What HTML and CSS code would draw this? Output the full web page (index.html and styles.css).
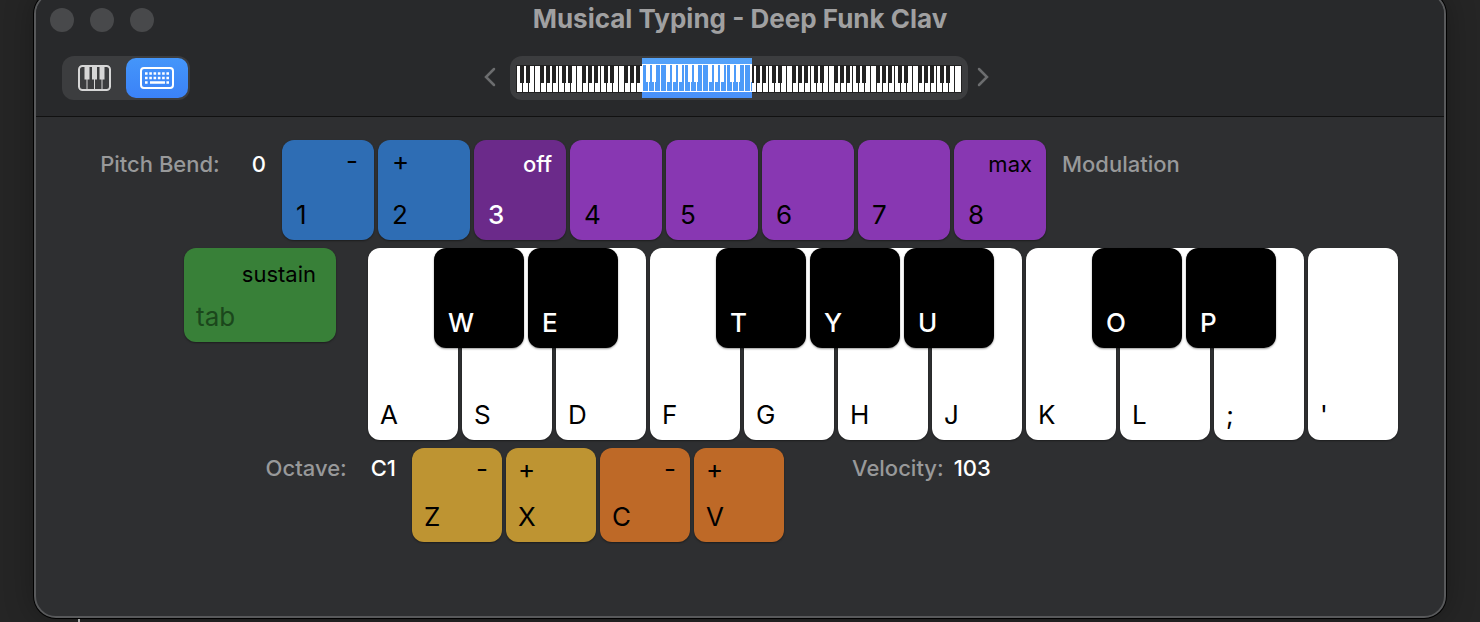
FILE: index.html
```html
<!DOCTYPE html>
<html lang="en">
  <head>
    <meta charset="UTF-8" />
    <meta name="viewport" content="width=device-width, initial-scale=1.0" />
    <title>Musical Typing - Deep Funk Clav</title>
    <link rel="stylesheet" href="styles.css">
  </head>
  <body>
    <main class="window">
      <header class="header">
        <div class="titlebar">
          <div class="lights">
            <button class="light" aria-label="Close"></button>
            <button class="light" aria-label="Minimize"></button>
            <button class="light" aria-label="Zoom"></button>
          </div>
          <h1>Musical Typing - Deep Funk Clav</h1>
        </div>

        <div class="toolbar">
          <div class="switch">
            <button class="switch-btn" aria-label="Keyboard" aria-pressed="false">
              <svg width="34" height="28" viewBox="0 0 34 28">
                <rect x="1" y="2" width="31" height="24" rx="3.500" fill="none" stroke="#d6d6d6" stroke-width="2" />
                <path d="M6.500 2h5v13.500h-5zM14 2h5v13.500h-5zM21.500 2h5v13.500h-5z" fill="#d6d6d6" />
                <path d="M9 15v11M16.500 15v11M24 15v11" stroke="#d6d6d6" />
              </svg>
            </button>
            <button class="switch-btn active" aria-label="Musical Typing" aria-pressed="true">
              <svg width="36" height="24" viewBox="0 0 36 24">
                <rect x="2" y="2" width="32" height="20" rx="3" fill="none" stroke="#fff" stroke-width="2" />
                <path d="M6 7.500h24M6 12h24" stroke="#fff" stroke-width="2.600" stroke-dasharray="2.600 1.680" />
                <path d="M6 16.500h2.600M11 16.500h15M27.400 16.500h2.600" stroke="#fff" stroke-width="2.400" />
              </svg>
            </button>
          </div>

          <div class="range">
            <button class="arrow prev" aria-label="Previous octave">
              <svg width="14" height="20" viewBox="0 0 14 20"><path d="M11 2L3 10l8 8" /></svg>
            </button>
            <div class="minimap">
              <svg width="446" height="40" viewBox="0 0 446 40">
                <defs>
                  <pattern id="octave" x="1" y="0" width="42" height="40" patternUnits="userSpaceOnUse">
                    <path d="M0 8h5v26H0zM6 8h5v26H6zM12 8h5v26h-5zM18 8h5v26h-5zM24 8h5v26h-5zM30 8h5v26h-5zM36 8h5v26h-5z" fill="#fff" />
                    <path d="M3 8h4v17H3zM9 8h4v17H9zM23 8h4v17h-4zM29 8h4v17h-4zM35 8h4v17h-4z" fill="#222" />
                  </pattern>
                  <pattern id="octaveOn" x="1" y="0" width="42" height="40" patternUnits="userSpaceOnUse">
                    <path d="M0 7h5v26H0zM6 7h5v26H6zM12 7h5v26h-5zM18 7h5v26h-5zM24 7h5v26h-5zM30 7h5v26h-5zM36 7h5v26h-5z" fill="#4d9bf9" />
                    <path d="M3 7h4v17H3zM9 7h4v17H9zM23 7h4v17h-4zM29 7h4v17h-4zM35 7h4v17h-4z" fill="#fff" />
                  </pattern>
                  <linearGradient id="blue" x2="0" y2="1">
                    <stop offset="0" stop-color="#55a4fa" />
                    <stop offset="1" stop-color="#4890fa" />
                  </linearGradient>
                </defs>
                <rect y="7" width="446" height="28" fill="#222" />
                <rect x="1" y="8" width="444" height="26" fill="url(#octave)" />
                <rect x="443" y="8" width="2" height="26" fill="#fff" />
                <rect x="126" width="110" height="40" fill="url(#blue)" />
                <rect x="126" y="6" width="110" height="28" fill="#fff" />
                <rect x="126" y="7" width="110" height="26" fill="url(#octaveOn)" />
              </svg>
            </div>
            <button class="arrow" aria-label="Next octave">
              <svg width="14" height="20" viewBox="0 0 14 20"><path d="M3 2l8 8-8 8" /></svg>
            </button>
          </div>
        </div>
      </header>

      <section class="board">
        <!-- Pitch bend + modulation -->
        <div class="row">
          <div class="lead bend"><span>Pitch Bend:</span><output>0</output></div>
          <div class="keys">
            <button class="key tall blue"><span class="hint sign right">-</span><span>1</span></button>
            <button class="key tall blue"><span class="hint sign">+</span><span>2</span></button>
            <button class="key tall purple selected"><span class="hint right">off</span><span>3</span></button>
            <button class="key tall purple"><span>4</span></button>
            <button class="key tall purple"><span>5</span></button>
            <button class="key tall purple"><span>6</span></button>
            <button class="key tall purple"><span>7</span></button>
            <button class="key tall purple"><span class="hint right">max</span><span>8</span></button>
          </div>
          <div class="label">Modulation</div>
        </div>

        <!-- Sustain + piano keys -->
        <div class="row middle">
          <button class="key green"><span class="hint right">sustain</span><span>tab</span></button>
          <div class="keys">
            <div class="note"><button class="key white">A</button><button class="key black">W</button></div>
            <div class="note"><button class="key white">S</button><button class="key black">E</button></div>
            <div class="note"><button class="key white">D</button></div>
            <div class="note"><button class="key white">F</button><button class="key black">T</button></div>
            <div class="note"><button class="key white">G</button><button class="key black">Y</button></div>
            <div class="note"><button class="key white">H</button><button class="key black">U</button></div>
            <div class="note"><button class="key white">J</button></div>
            <div class="note"><button class="key white">K</button><button class="key black">O</button></div>
            <div class="note"><button class="key white">L</button><button class="key black">P</button></div>
            <div class="note"><button class="key white">;</button></div>
            <div class="note"><button class="key white">'</button></div>
          </div>
        </div>

        <!-- Octave + velocity -->
        <div class="row">
          <div class="lead octave"><span>Octave:</span><output>C1</output></div>
          <div class="keys">
            <button class="key yellow"><span class="hint sign right">-</span><span>Z</span></button>
            <button class="key yellow"><span class="hint sign">+</span><span>X</span></button>
            <button class="key orange"><span class="hint sign right">-</span><span>C</span></button>
            <button class="key orange"><span class="hint sign">+</span><span>V</span></button>
          </div>
          <div class="label velocity"><span>Velocity:</span><output>103</output></div>
        </div>
      </section>
    </main>
    <div class="tick"></div>
  </body>
</html>
```
FILE: styles.css
```css
* {
  margin: 0;
  padding: 0;
  box-sizing: border-box;
}

body {
  font-family: Inter, "Liberation Sans", sans-serif;
  background: #252525;
  height: 100vh;
  overflow: hidden;
}

button {
  font: inherit;
  color: inherit;
  border: none;
  background: none;
}

svg {
  display: block;
}

/* the top edge sits just above the screen */
.window {
  margin: -8px 34px 0;
  min-height: calc(100vh + 4px);
  background: #2e2f31;
  border: 2px solid #58595b;
  border-radius: 22px;
  box-shadow: 0 0 0 1px #000, 0 0 30px rgba(0, 0, 0, 0.3);
  overflow: hidden;
}

.header {
  background: #28292b;
  border-bottom: 1px solid #111;
  padding: 6px 14px 16px;
}

.titlebar,
.toolbar {
  display: grid;
  grid-template-columns: 1fr auto 1fr;
  align-items: center;
}

.titlebar {
  height: 40px;
}

.titlebar h1 {
  font-size: 26px;
  line-height: 38px;
  font-weight: 700;
  color: #a0a0a1;
  padding-bottom: 2px;
}

.lights {
  display: flex;
  gap: 16px;
}

.light {
  width: 24px;
  height: 24px;
  border-radius: 50%;
  background: #48494b;
}

.toolbar {
  margin-top: 16px;
  padding: 0 12px;
}

.switch {
  display: flex;
  justify-self: start;
  padding: 2px;
  border-radius: 12px;
  background: #3c3d3f;
}

.switch-btn {
  width: 62px;
  height: 40px;
  border-radius: 10px;
  display: flex;
  align-items: center;
  justify-content: center;
}

.switch-btn.active {
  background: linear-gradient(#4496fa, #3b82f7);
}

.range {
  display: flex;
  align-items: center;
  margin-right: 12px;
}

.arrow {
  width: 30px;
  height: 40px;
  padding-bottom: 2px;
  display: flex;
  align-items: center;
  justify-content: center;
}

.arrow.prev {
  width: 40px;
}

.arrow path {
  fill: none;
  stroke: #6c6d6f;
  stroke-width: 2.5;
  stroke-linecap: round;
}

.minimap {
  padding: 2px 6px;
  border-radius: 12px;
  background: #3c3d3f;
}

.board {
  max-width: 1316px;
  margin: 0 auto;
  padding: 23px 0;
  display: flex;
  flex-direction: column;
  gap: 8px;
}

.row,
.keys {
  display: flex;
}

.keys {
  gap: 4px;
}

.middle {
  padding-left: 102px;
  gap: 32px;
}

.lead,
.label {
  display: flex;
  font-size: 22px;
  line-height: 28px;
  font-weight: 500;
  color: #98999a;
  padding-top: 10px;
}

.lead {
  justify-content: flex-end;
  padding-right: 16px;
}

.bend {
  width: 200px;
  gap: 32px;
}

.octave {
  width: 330px;
  gap: 24px;
  padding-top: 6px;
}

.label {
  padding-left: 16px;
}

.velocity {
  padding-left: 68px;
  padding-top: 6px;
  gap: 10px;
}

output {
  color: #fff;
}

.key {
  width: 90px;
  height: 94px;
  padding: 0 12px 9px;
  border-radius: 12px;
  display: flex;
  flex-direction: column;
  justify-content: flex-end;
  font-size: 26px;
  line-height: 32px;
  text-align: left;
  color: #000;
  box-shadow: 0 1px 2px rgba(0, 0, 0, 0.4);
}

.tall {
  width: 92px;
  height: 100px;
  padding: 0 14px 9px;
}

.hint {
  font-size: 22px;
  line-height: 28px;
  margin-bottom: auto;
  padding-top: 10px;
}

.hint.sign {
  font-size: 26px;
  padding-top: 7px;
}

.right {
  text-align: right;
}

.sign.right {
  padding-right: 2px;
}

.blue {
  background: #2e6db4;
}

.purple {
  background: #8837b2;
}

.purple.selected {
  background: #6b2a8a;
  color: #fff;
  font-weight: 500;
}

.green {
  width: 152px;
  padding-right: 20px;
  background: #388038;
  color: #1b471c;
}

.green .hint {
  padding-top: 12px;
  color: #000;
}

.yellow {
  background: #be9432;
}

.orange {
  background: #be6927;
}

.note {
  position: relative;
}

.white {
  height: 192px;
  background: #fff;
}

/* black keys lie over the joint of two white keys */
.black {
  position: absolute;
  top: 0;
  left: 66px;
  z-index: 1;
  height: 100px;
  padding: 0 14px 9px;
  background: #000;
  color: #fff;
  font-weight: 500;
}

.tick {
  width: 2px;
  height: 3px;
  margin: 1px 0 0 78px;
  background: #aaa;
}
```
